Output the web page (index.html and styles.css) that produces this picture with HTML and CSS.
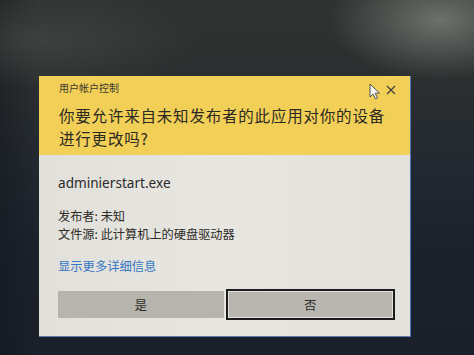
FILE: index.html
```html
<!DOCTYPE html>
<html lang="zh-CN">
<head>
<meta charset="utf-8">
<title>用户帐户控制</title>
<link rel="stylesheet" href="styles.css">
</head>
<body>
<div class="screen">
  <div class="dialog">
    <div class="header">
      <div class="title-row">
        <span class="title">用户帐户控制</span>
        <svg class="close" width="10" height="10" viewBox="0 0 10 10"><path d="M1 1 L9 9 M9 1 L1 9" stroke="#3a3a3a" stroke-width="1.1" fill="none"/></svg>
      </div>
      <div class="question">你要允许来自未知发布者的此应用对你的设备<br>进行更改吗?</div>
    </div>
    <div class="body">
      <div class="filename">adminierstart.exe</div>
      <div class="meta">
        <div>发布者: 未知</div>
        <div>文件源: 此计算机上的硬盘驱动器</div>
      </div>
      <a class="more" href="#">显示更多详细信息</a>
      <div class="buttons">
        <div class="btn yes">是</div>
        <div class="btn no">否</div>
      </div>
    </div>
    <svg class="cursor" width="13" height="17" viewBox="0 0 13 17"><path d="M1 1 L1 14 L4 11 L6.5 16 L8.5 15 L6.2 10.2 L10.5 10.2 Z" fill="#f4f4f2" stroke="#555" stroke-width="1" stroke-linejoin="round"/></svg>
  </div>
</div>
</body>
</html>
```
FILE: styles.css
```css
html, body {
  margin: 0;
  padding: 0;
}
body {
  width: 474px;
  height: 355px;
  overflow: hidden;
  font-family: "Noto Sans", "Noto Sans CJK SC", sans-serif;
}
.screen {
  width: 474px;
  height: 355px;
  box-sizing: border-box;
  padding: 76px 0 0 39px;
  background:
    radial-gradient(ellipse 110px 60px at 440px 20px, rgba(118,124,118,0.85), rgba(118,124,118,0) 100%),
    radial-gradient(ellipse 160px 50px at 40px 40px, rgba(70,74,72,0.6), rgba(70,74,72,0) 100%),
    linear-gradient(90deg, rgba(12,16,22,0.35) 0%, rgba(12,16,22,0) 8%),
    linear-gradient(180deg, #2f3331 0%, #2b2f30 22%, #232930 45%, #1c222c 70%, #1a1f29 100%);
}
.dialog {
  position: relative;
  width: 372px;
  box-sizing: border-box;
  border-right: 1px solid #4a76b6;
  border-bottom: 1px solid #5d79b0;
}
.header {
  background: #f2cf56;
  padding: 5px 14px 8px 20px;
  height: 79px;
  box-sizing: border-box;
  color: #2b2a26;
}
.title-row {
  display: flex;
  justify-content: space-between;
  align-items: center;
  height: 14px;
}
.title {
  font-family: "Noto Sans CJK SC", sans-serif;
  font-size: 10px;
  line-height: 14px;
  color: #3a3830;
}
.close {
  margin-top: 4px;
}
.question {
  margin-top: 9px;
  font-family: "Noto Sans CJK SC", sans-serif;
  font-size: 15.5px;
  letter-spacing: 0.8px;
  line-height: 22.5px;
  color: #2a2924;
}
.body {
  background: linear-gradient(90deg, #e2e0da 0%, #e8e6e0 50%, #e3e1db 100%);
  height: 181px;
  box-sizing: border-box;
  padding: 18px 15px 0 19px;
  color: #2c2b28;
}
.filename {
  font-family: "Noto Sans", sans-serif;
  font-size: 13.6px;
  line-height: 20px;
  color: #2a2a28;
}
.meta {
  margin-top: 15px;
  font-family: "Noto Sans CJK SC", sans-serif;
  font-size: 12.2px;
  line-height: 17.7px;
}
.more {
  display: block;
  margin-top: 14px;
  font-family: "Noto Sans CJK SC", sans-serif;
  font-size: 12.3px;
  line-height: 18px;
  color: #3476c4;
  text-decoration: none;
}
.buttons {
  margin-top: 14px;
  display: flex;
  align-items: center;
  gap: 2px;
}
.btn {
  display: flex;
  align-items: center;
  justify-content: center;
  font-family: "Noto Sans CJK SC", sans-serif;
  font-size: 12.5px;
  color: #2e2d2a;
  box-sizing: border-box;
}
.yes {
  width: 166px;
  height: 27px;
  background: #b6b4ad;
}
.no {
  width: 170px;
  height: 31px;
  background: #b8b6af;
  border: 2px solid #1c1c1c;
  box-shadow: inset 0 0 0 1px #e2e0da;
}
.cursor {
  position: absolute;
  left: 330px;
  top: 7px;
}
```
